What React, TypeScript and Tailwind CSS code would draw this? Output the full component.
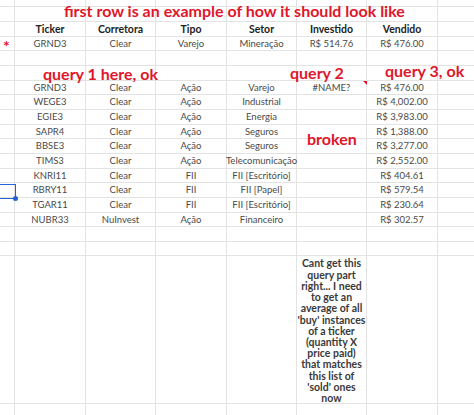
import clsx from 'clsx'

const cn = clsx

const COLS = ['w-[15px]', 'w-[71px]', 'w-[70px]', 'w-[71px]', 'w-[70px]', 'w-[70px]', 'w-[71px]', 'w-[36px]']

type Row = { cells?: string[]; h?: string; header?: boolean }

const data: string[][] = [
  ['GRND3', 'Clear', 'Ação', 'Varejo', '#NAME?', 'R$ 476.00'],
  ['WEGE3', 'Clear', 'Ação', 'Industrial', '', 'R$ 4,002.00'],
  ['EGIE3', 'Clear', 'Ação', 'Energia', '', 'R$ 3,983.00'],
  ['SAPR4', 'Clear', 'Ação', 'Seguros', '', 'R$ 1,388.00'],
  ['BBSE3', 'Clear', 'Ação', 'Seguros', '', 'R$ 3,277.00'],
  ['TIMS3', 'Clear', 'Ação', 'Telecomunicação', '', 'R$ 2,552.00'],
  ['KNRI11', 'Clear', 'FII', 'FII [Escritório]', '', 'R$ 404.61'],
  ['RBRY11', 'Clear', 'FII', 'FII [Papel]', '', 'R$ 579.54'],
  ['TGAR11', 'Clear', 'FII', 'FII [Escritório]', '', 'R$ 230.64'],
  ['NUBR33', 'NuInvest', 'Ação', 'Financeiro', '', 'R$ 302.57'],
]

const rows: Row[] = [
  { h: 'h-[7.33px]' },
  {},
  { cells: ['Ticker', 'Corretora', 'Tipo', 'Setor', 'Investido', 'Vendido'], header: true },
  { cells: ['GRND3', 'Clear', 'Varejo', 'Mineração', 'R$ 514.76', 'R$ 476.00'] },
  {},
  {},
  ...data.map((cells) => ({ cells })),
  {},
  {},
]

function GridRow({ row }: { row: Row }) {
  return (
    <div className={cn('flex', row.h ?? 'h-[14.67px]')}>
      {COLS.map((w, i) => {
        const text = i >= 1 && i <= 6 ? row.cells?.[i - 1] : undefined
        return (
          <div
            key={i}
            className={cn(
              w,
              'flex shrink-0 items-center justify-center overflow-visible whitespace-nowrap border-b border-[#e3e3e3] leading-none',
              i < 7 && 'border-r',
              row.header ? 'text-[10.5px] font-bold text-[#222]' : 'text-[9.5px] text-[#4a4a4a]',
            )}
          >
            {text}
          </div>
        )
      })}
    </div>
  )
}

const comment = [
  'Cant get this',
  'query part',
  'right... I need',
  'to get an',
  'average of all',
  "'buy' instances",
  'of a ticker',
  '(quantity X',
  'price paid)',
  'that matches',
  'this list of',
  "'sold' ones",
  'now',
]

const note = 'absolute text-[16px] font-bold leading-[20px] text-[#e0162b]'

export default function App() {
  return (
    <div
      className="relative h-[415px] w-[474px] overflow-hidden bg-white"
      style={{ fontFamily: 'Lato, "Noto Sans", sans-serif' }}
    >
      {rows.map((r, i) => (
        <GridRow key={i} row={r} />
      ))}

      {/* tall comment row */}
      <div className="flex h-[148px]">
        {COLS.map((w, i) => (
          <div key={i} className={cn(w, 'shrink-0 border-b border-[#e3e3e3]', i < 7 && 'border-r')}>
            {i === 5 ? (
              <div className="flex flex-col items-center pt-[2px] text-[10.5px] font-bold leading-[11.2px] text-[#3a3a3a]">
                {comment.map((l) => (
                  <span key={l} className="whitespace-nowrap">
                    {l}
                  </span>
                ))}
              </div>
            ) : null}
          </div>
        ))}
      </div>
      <div className="flex h-[20px]">
        {COLS.map((w, i) => (
          <div key={i} className={cn(w, 'shrink-0', i < 7 && 'border-r border-[#e3e3e3]')} />
        ))}
      </div>

      {/* overlays */}
      <span className="absolute left-[3px] top-[36px] text-[16px] font-bold leading-[20px] text-[#e0162b]">*</span>
      <div className="absolute left-0 top-[184px] h-[15px] w-[16px] border-[1.5px] border-l-0 border-[#2463d4]" />
      <div className="absolute left-[13px] top-[196px] h-[5px] w-[5px] rounded-full bg-[#2463d4]" />
      <div className="absolute left-[363px] top-[81px] h-0 w-0 border-l-[4px] border-t-[4px] border-l-transparent border-t-[#e0162b]" />

      <div className={cn(note, 'left-[64px] top-[1px]')}>first row is an example of how it should look like</div>
      <div className={cn(note, 'left-[43px] top-[64px]')}>query 1 here, ok</div>
      <div className={cn(note, 'left-[290px] top-[63px]')}>query 2</div>
      <div className={cn(note, 'left-[385px] top-[61px]')}>query 3, ok</div>
      <div className={cn(note, 'left-[307px] top-[129px]')}>broken</div>
    </div>
  )
}
